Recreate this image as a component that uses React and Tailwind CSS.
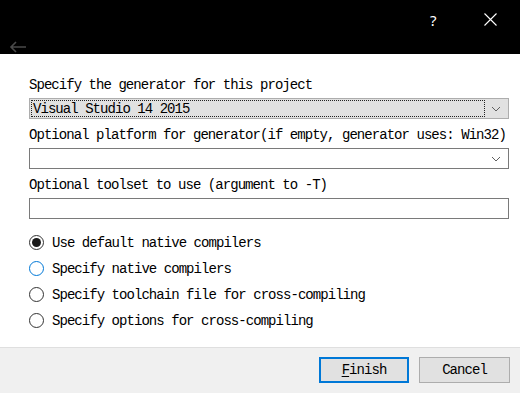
import React, { useState } from "react";

const mono = { fontFamily: '"Liberation Mono", "DejaVu Sans Mono", monospace' };

const Chevron = () => (
  <svg width="10" height="6" viewBox="0 0 10 6" className="shrink-0">
    <path d="M1 1 L5 5 L9 1" fill="none" stroke="#606060" strokeWidth="1" />
  </svg>
);

const Radio = ({ checked, focused, label, onClick }) => (
  <div className="flex items-center h-[26px] cursor-default" onClick={onClick}>
    <div
      className={`w-[15px] h-[15px] rounded-full border bg-white flex items-center justify-center ${
        focused ? "border-[#0078d7]" : "border-[#333333]"
      }`}
    >
      {checked && <div className="w-[9px] h-[9px] rounded-full bg-[#1a1a1a]" />}
    </div>
    <span className="ml-[8px] pt-[1px] text-[14px] leading-[20px] tracking-[-0.95px] text-black" style={mono}>
      {label}
    </span>
  </div>
);

const App = () => {
  const [choice, setChoice] = useState(0);
  const options = [
    "Use default native compilers",
    "Specify native compilers",
    "Specify toolchain file for cross-compiling",
    "Specify options for cross-compiling",
  ];

  return (
    <div className="w-[520px] h-[393px] flex flex-col bg-white overflow-hidden select-none">
      {/* Title bar */}
      <div className="h-[54px] bg-black relative shrink-0">
        <span
          className="absolute left-[430px] top-[9px] text-[15px] text-white"
          style={{ fontFamily: '"Noto Sans", "DejaVu Sans", sans-serif' }}
        >
          ?
        </span>
        <svg className="absolute left-[484px] top-[13px]" width="13" height="13" viewBox="0 0 13 13">
          <path d="M0.5 0.5 L12.5 12.5 M12.5 0.5 L0.5 12.5" stroke="#ffffff" strokeWidth="1.1" />
        </svg>
        <svg className="absolute left-[9px] top-[41px]" width="18" height="12" viewBox="0 0 18 12">
          <path d="M17 6 H2 M7 1 L2 6 L7 11" fill="none" stroke="#4a4a4a" strokeWidth="1.6" />
        </svg>
      </div>

      {/* Content */}
      <div className="flex-1 px-[29px] pt-[15px] text-black">
        <div className="mt-[6px] mb-[3px] h-[20px] text-[14px] leading-[20px] tracking-[-0.95px]" style={mono}>
          Specify the generator for this project
        </div>
        <div className="h-[21px] w-[480px] bg-[#e1e1e1] border border-[#adadad] flex items-center pl-[1px] pr-[7px]">
          <div className="h-[17px] flex-1 border border-dotted border-[#222222] flex items-center pl-[1px]">
            <span className="text-[14px] leading-[15px] tracking-[-0.95px] pt-[1px]" style={mono}>
              Visual Studio 14 2015
            </span>
          </div>
          <div className="ml-[6px]">
            <Chevron />
          </div>
        </div>

        <div className="mt-[6px] mb-[3px] h-[20px] text-[14px] leading-[20px] tracking-[-0.95px] whitespace-nowrap" style={mono}>
          Optional platform for generator(if empty, generator uses: Win32)
        </div>
        <div className="h-[21px] w-[480px] bg-white border border-[#7a7a7a] flex items-center justify-end pr-[7px]">
          <Chevron />
        </div>

        <div className="mt-[6px] mb-[3px] h-[20px] text-[14px] leading-[20px] tracking-[-0.95px]" style={mono}>
          Optional toolset to use (argument to -T)
        </div>
        <div className="h-[21px] w-[480px] bg-white border border-[#7a7a7a]" />

        <div className="mt-[10px] flex flex-col">
          {options.map((label, i) => (
            <Radio
              key={label}
              label={label}
              checked={choice === i}
              focused={i === 1}
              onClick={() => setChoice(i)}
            />
          ))}
        </div>
      </div>

      {/* Footer */}
      <div className="h-[46px] shrink-0 bg-[#f0f0f0] border-t border-[#dfdfdf] flex justify-end items-start pt-[9px] pr-[10px] gap-[10px]">
        <button
          className="w-[90px] h-[26px] bg-[#e1e1e1] border-2 border-[#0078d7] text-[14px] tracking-[-0.95px] text-black"
          style={mono}
        >
          <span className="underline underline-offset-2">F</span>inish
        </button>
        <button
          className="w-[91px] h-[26px] bg-[#e1e1e1] border border-[#adadad] text-[14px] tracking-[-0.95px] text-black"
          style={mono}
        >
          Cancel
        </button>
      </div>
    </div>
  );
};

export default App;
